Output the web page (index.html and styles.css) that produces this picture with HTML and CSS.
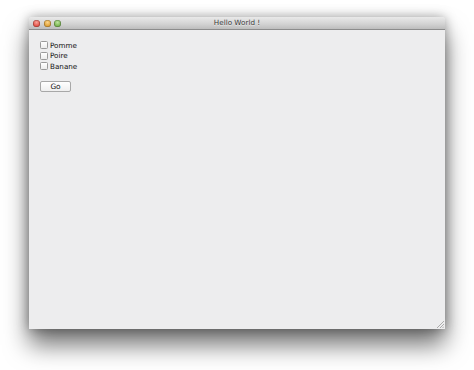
FILE: index.html
```html
<!DOCTYPE html>
<html>
<head>
<meta charset="utf-8">
<link rel="stylesheet" href="styles.css">
</head>
<body>
<div class="window">
  <div class="titlebar">
    <div class="lights">
      <span class="light red"></span>
      <span class="light yellow"></span>
      <span class="light green"></span>
    </div>
    <div class="title">Hello World !</div>
  </div>
  <div class="content">
    <label class="check"><span class="box"></span>Pomme</label>
    <label class="check"><span class="box"></span>Poire</label>
    <label class="check"><span class="box"></span>Banane</label>
    <button class="btn">Go</button>
    <svg class="grip" width="8" height="8" viewBox="0 0 8 8">
      <line x1="1" y1="8" x2="8" y2="1" stroke="#9a9a9a" stroke-width="0.8"/>
      <line x1="4" y1="8" x2="8" y2="4" stroke="#9a9a9a" stroke-width="0.8"/>
      <line x1="6.5" y1="8" x2="8" y2="6.5" stroke="#9a9a9a" stroke-width="0.8"/>
    </svg>
  </div>
</div>
</body>
</html>
```
FILE: styles.css
```css
html, body {
  margin: 0;
  padding: 0;
  background: #ffffff;
  width: 474px;
  height: 370px;
  overflow: hidden;
}
body {
  padding-top: 17px;
  padding-left: 29px;
  box-sizing: border-box;
  font-family: "DejaVu Sans", "Liberation Sans", sans-serif;
}
.window {
  width: 416px;
  height: 312px;
  display: flex;
  flex-direction: column;
  background: #ededee;
  box-shadow: 0 16px 24px rgba(0,0,0,0.55), 0 0 12px rgba(0,0,0,0.35);
  border-radius: 3px 3px 0 0;
}
.titlebar {
  height: 12px;
  flex: none;
  position: relative;
  background: linear-gradient(#e9e9e9, #d2d2d2 60%, #bdbdbd);
  border-bottom: 1px solid #8c8c8c;
  border-radius: 3px 3px 0 0;
  display: flex;
  align-items: center;
  justify-content: center;
}
.lights {
  position: absolute;
  left: 4px;
  top: 3px;
  display: flex;
  gap: 3.5px;
}
.light {
  width: 7px;
  height: 7px;
  border-radius: 50%;
  box-shadow: inset 0 0 0 0.6px rgba(0,0,0,0.35);
}
.red { background: radial-gradient(circle at 50% 35%, #f8a39a, #e0473c 70%); }
.yellow { background: radial-gradient(circle at 50% 35%, #fbd48a, #dc9a2a 70%); }
.green { background: radial-gradient(circle at 50% 35%, #bde39f, #6fae45 70%); }
.title {
  font-size: 7.2px;
  color: #3b3b3b;
  line-height: 12px;
  text-shadow: 0 1px 0 rgba(255,255,255,0.5);
}
.content {
  flex: 1;
  position: relative;
  padding: 10px 0 0 11px;
  display: flex;
  flex-direction: column;
  align-items: flex-start;
}
.check {
  display: flex;
  align-items: center;
  gap: 2px;
  height: 10.5px;
  font-size: 7.2px;
  color: #111;
}
.box {
  width: 6px;
  height: 6px;
  border: 1px solid #9a9a9a;
  border-radius: 1.5px;
  background: linear-gradient(#ffffff, #ececec);
}
.btn {
  margin-top: 9px;
  width: 31px;
  height: 11px;
  padding: 0;
  border: 1px solid #a8a8a8;
  border-radius: 2px;
  background: linear-gradient(#ffffff, #efefef);
  font-family: "DejaVu Sans", "Liberation Sans", sans-serif;
  font-size: 7.4px;
  color: #111;
  line-height: 9px;
}
.grip {
  position: absolute;
  right: 1px;
  bottom: 1px;
}
```
